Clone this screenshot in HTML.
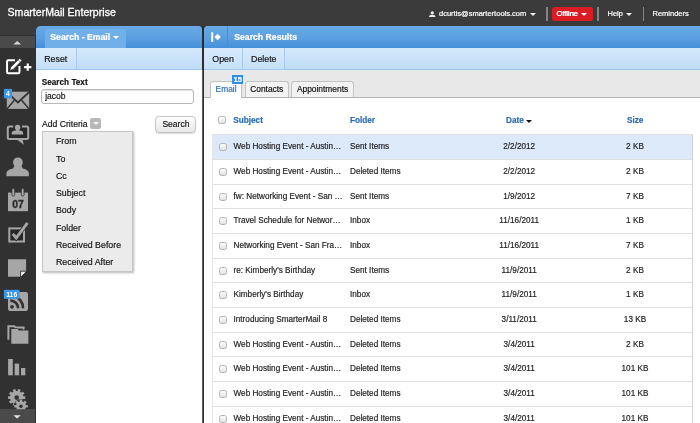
<!DOCTYPE html>
<html>
<head>
<meta charset="utf-8">
<title>SmarterMail Enterprise</title>
<style>
*{box-sizing:border-box;margin:0;padding:0}
html,body{width:700px;height:423px;overflow:hidden;background:#fff}
body{font-family:"Liberation Sans",sans-serif;font-size:8.2px;color:#141414;position:relative;-webkit-text-stroke:.18px}
.abs{position:absolute}
#wrap{position:absolute;left:0;top:0;width:700px;height:423px;overflow:hidden;will-change:transform}
#topbar{left:0;top:0;width:700px;height:48px;background:#3b3b3b}
#title{left:7.5px;top:5px;font-size:10.6px;color:#fff;-webkit-text-stroke:.3px #fff;line-height:14px;white-space:nowrap}
.tr{position:absolute;top:7px;height:13px;line-height:13px;color:#fff;-webkit-text-stroke:.2px #fff;font-size:7.5px;white-space:nowrap}
.vsep{position:absolute;top:6.5px;width:1.4px;height:14.5px;background:#858585}
.caret{position:absolute;width:0;height:0;border-left:3px solid transparent;border-right:3px solid transparent;border-top:3px solid #f0f0f0}
#offline{left:551.5px;top:6.5px;width:41.5px;height:14.5px;background:#dc1c24;border-radius:2.5px;color:#fff;font-size:7.5px;line-height:14px;padding-left:5px;white-space:nowrap;text-shadow:0 0 .4px #fff}
#sidebar{left:0;top:35px;width:35.5px;height:388px;background:#313131}
#sbup{left:0;top:35.8px;width:34.6px;height:12.6px;background:#4a4a4a}
#sbdn{left:0;top:409.2px;width:34.6px;height:14px;background:#4a4a4a}
.phdr{-webkit-text-stroke:.2px #fff;position:absolute;top:25.7px;height:22.3px;background:linear-gradient(#69aae6,#5a9fe0 55%,#4590da);color:#fff;font-weight:bold;font-size:8.8px;line-height:23px;white-space:nowrap}
.ptool{position:absolute;top:48px;height:22px;background:linear-gradient(#d4e8fb,#bfdcf7);border-bottom:1px solid #9fc9f0;font-size:8.8px;line-height:23px;color:#141414;white-space:nowrap}
.tbtn{position:absolute;top:0;height:21px;border-right:1px solid #a6cbee;text-align:center;background:linear-gradient(#d9ebfc,#c6e0f8)}
#divider{left:201.9px;top:25.7px;width:2.3px;height:398px;background:linear-gradient(to right,#858585 0,#3c3c3c 45%,#242424 100%)}
#divtop{left:201.9px;top:25.7px;width:2.3px;height:44.3px;background:#2c2c2c}
#lpanel{left:35.5px;top:70px;width:166.5px;height:353px;background:#fff}
#rbody{left:204px;top:70px;width:496px;height:353px;background:#fff}
#tabstrip{left:204px;top:70px;width:496px;height:27.5px;background:#e8e8e8;border-bottom:1px solid #b4b4b4}
.tab{position:absolute;top:80.5px;height:16.5px;background:#f2f2f2;border:1px solid #c2c2c2;border-bottom:none;border-radius:3.5px 3.5px 0 0;font-size:8.4px;line-height:15px;text-align:center;color:#111;white-space:nowrap}
.tab.active{background:#fff;color:#2c6eb8;height:17.5px}
#badge15{left:232.2px;top:74.8px;width:11.2px;height:9.6px;background:#2f8fe6;color:#fff;font-size:7.6px;font-weight:bold;line-height:10px;text-align:center}
.row{position:absolute;left:212px;width:481px;height:25px;line-height:24.7px;border-top:1px solid #dfdfdf;border-left:1px solid #e6e6e6;border-right:1px solid #d2d2d2;font-size:8.2px;color:#1e1e1e;white-space:nowrap}
.row.sel{background:#dbe9f9}
.row span{position:absolute;top:0}
.cb{position:absolute;width:8px;height:8px;border:1px solid #b4b4b4;border-radius:2.4px;background:linear-gradient(#fdfdfd,#e2e2e2)}
.row .cb{left:5.5px;top:8px}
.c1{left:20.5px}.c2{left:137px}.c3{left:256.2px;width:100px;text-align:center}.c4{left:372px;width:100px;text-align:center}
.hdr{position:absolute;top:114.5px;font-size:8.2px;font-weight:bold;color:#2a6cb6;line-height:12px;white-space:nowrap}
.menu{left:41.5px;top:131px;width:91px;height:140.5px;background:#ebebeb;border:1px solid #c6c6c6;box-shadow:.5px 1px 2px rgba(0,0,0,.28)}
.menu div{position:absolute;left:13.5px;font-size:8.8px;color:#141414;line-height:12px;white-space:nowrap}
</style>
</head>
<body>
<div id="wrap">
<div id="topbar" class="abs"></div>
<div id="title" class="abs">SmarterMail Enterprise</div>

<svg class="abs" style="left:429px;top:10.5px" width="6.5" height="6.5" viewBox="0 0 13 13"><circle cx="6.5" cy="3.6" r="3.3" fill="#f0f0f0"/><path d="M0.3 13 V10.5 Q0.3 7.3 6.5 7.3 Q12.7 7.3 12.7 10.5 V13Z" fill="#f0f0f0"/></svg>
<div class="tr" style="left:439px">dcurtis@smartertools.com</div>
<div class="caret" style="left:529.6px;top:12.6px"></div>
<div class="vsep" style="left:546.2px"></div>
<div id="offline" class="abs">Offline</div>
<div class="caret" style="left:580.8px;top:12.6px;border-top-color:#fff"></div>
<div class="vsep" style="left:597.3px"></div>
<div class="tr" style="left:607.5px">Help</div>
<div class="caret" style="left:626px;top:12.6px"></div>
<div class="vsep" style="left:642.5px"></div>
<div class="tr" style="left:652.5px">Reminders</div>

<div id="sidebar" class="abs"></div>
<div id="sbup" class="abs"></div>
<div id="sbdn" class="abs"></div>
<svg class="abs" style="left:0;top:0" width="36" height="423" viewBox="0 0 36 423">
<!-- up / down arrows -->
<path d="M13.3 44.6 L17.2 41.1 L21.1 44.6Z" fill="#d4d4d4"/>
<path d="M13.4 415.3 L20.8 415.3 L17.1 418.4Z" fill="#e4e4e4"/>
<!-- compose -->
<path d="M15 60.2 H8.3 Q7.05 60.2 7.05 61.4 V72.1 Q7.05 73.35 8.3 73.35 H18.2 Q19.45 73.35 19.45 72.1 V66" fill="none" stroke="#fff" stroke-width="2"/>
<path d="M19.6 58.2 L22 60.6 L13.2 69.4 L9.7 70.5 L10.8 67Z" fill="#fff" stroke="#313131" stroke-width=".9" stroke-linejoin="round"/>
<path d="M18 59.9 L20.4 62.3" stroke="#313131" stroke-width=".5" fill="none"/>
<path d="M27.75 63.5 V70.8 M24.1 67.15 H31.4" stroke="#fff" stroke-width="2.2" fill="none"/>
<!-- mail -->
<rect x="6.8" y="91.7" width="22.4" height="17.2" fill="#a6a6a6"/>
<path d="M6.4 91.6 L17.9 102.4 L29.6 91.6" fill="none" stroke="#313131" stroke-width="1.8"/>
<path d="M6.6 109.2 L14.4 100.2 M29.4 109.2 L21.6 100.2" fill="none" stroke="#313131" stroke-width="1.5"/>
<rect x="3.9" y="88.9" width="8.2" height="9.4" fill="#3b96e8"/>
<text x="8" y="96.1" font-family="Liberation Sans" font-size="6.8" font-weight="bold" fill="#fff" text-anchor="middle">4</text>
<!-- chat -->
<rect x="8" y="127" width="20" height="12" fill="#292929"/>
<path d="M13.2 126.6 H9.3 Q7.8 126.6 7.8 128.1 V137.5 Q7.8 139 9.3 139 H26.7 Q28.2 139 28.2 137.5 V128.1 Q28.2 126.6 26.7 126.6 H22" fill="none" stroke="#a6a6a6" stroke-width="2"/>
<path d="M17 139.6 L23.8 144.8 L22.6 139.6Z" fill="#a6a6a6"/>
<circle cx="17.6" cy="127.4" r="2.7" fill="#a6a6a6"/>
<path d="M11.7 134.4 V133.2 Q11.7 131 15.6 130.6 L16.4 129.4 H18.8 L19.6 130.6 Q23.2 131 23.2 133.2 V134.4Z" fill="#a6a6a6"/>
<!-- person -->
<ellipse cx="17.9" cy="162.4" rx="4.8" ry="5" fill="#a6a6a6"/>
<path d="M6.4 176.2 V173.4 Q6.4 169.8 13 168.4 L14.6 165.6 H21.2 L22.8 168.4 Q28.9 169.8 28.9 173.4 V176.2Z" fill="#a6a6a6"/>
<!-- calendar -->
<rect x="8" y="192.6" width="20" height="18.6" fill="#a6a6a6"/>
<rect x="11.9" y="188.5" width="2.8" height="7.6" rx="1.4" fill="#a6a6a6" stroke="#313131" stroke-width=".8"/>
<rect x="21.3" y="188.5" width="2.8" height="7.6" rx="1.4" fill="#a6a6a6" stroke="#313131" stroke-width=".8"/>
<text x="18" y="207.9" font-family="Liberation Sans" font-size="10.4" font-weight="bold" fill="#2c2c2c" stroke="#2c2c2c" stroke-width=".35" text-anchor="middle">07</text>
<!-- task -->
<rect x="9.3" y="228.4" width="14.7" height="13.1" fill="#282828" stroke="#a6a6a6" stroke-width="2"/>
<path d="M12.6 233.6 L16.2 238 L27.5 222.8" fill="none" stroke="#313131" stroke-width="4.2"/>
<path d="M12.8 233.8 L16.2 238 L27.5 222.8" fill="none" stroke="#a6a6a6" stroke-width="2.8"/>
<!-- note -->
<path d="M8 259.2 H26.1 V271 L20.4 276.8 H8Z" fill="#a6a6a6"/>
<path d="M20.6 277.4 V271.2 H26.7Z" fill="#ececec" stroke="#313131" stroke-width=".9"/>
<!-- rss -->
<rect x="8" y="291.9" width="20" height="19" rx="2.2" fill="#a6a6a6"/>
<circle cx="12" cy="306.8" r="1.9" fill="#313131"/>
<path d="M10.4 300.6 A7.4 7.4 0 0 1 18 308.2" fill="none" stroke="#313131" stroke-width="2.6"/>
<path d="M10.4 295.6 A12.4 12.4 0 0 1 23 308.2" fill="none" stroke="#313131" stroke-width="2.6"/>
<rect x="3.9" y="289.8" width="15.6" height="9" fill="#3b96e8"/>
<text x="11.7" y="297" font-family="Liberation Sans" font-size="6.8" font-weight="bold" fill="#fff" text-anchor="middle">116</text>
<!-- folders -->
<path d="M8.4 339.8 V326.2 H14.4 L15.6 327.6 H23.6 V329.6" fill="none" stroke="#a6a6a6" stroke-width="2"/>
<path d="M11.3 343.8 V329 H17.6 L18.8 330.6 H28.4 V343.8Z" fill="#a6a6a6" stroke="#313131" stroke-width="1" paint-order="stroke"/>
<!-- chart -->
<rect x="8.1" y="359" width="4.7" height="16.3" fill="#a6a6a6"/>
<rect x="14.7" y="363.6" width="4.4" height="11.7" fill="#a6a6a6"/>
<rect x="21" y="368" width="4.3" height="7.3" fill="#a6a6a6"/>
<!-- gears -->
<circle cx="16.7" cy="397.6" r="6.7" fill="#a6a6a6"/><path d="M8.10 397.60 L25.30 397.60 M9.74 392.55 L23.66 402.65 M14.04 389.42 L19.36 405.78 M19.36 389.42 L14.04 405.78 M23.66 392.55 L9.74 402.65" stroke="#a6a6a6" stroke-width="2.7" fill="none"/><circle cx="16.7" cy="397.6" r="2.3" fill="#313131"/>
<circle cx="21" cy="406.3" r="7.3" fill="#313131"/>
<circle cx="21" cy="406.3" r="4.9" fill="#a6a6a6"/><path d="M14.20 406.30 L27.80 406.30 M16.19 401.49 L25.81 411.11 M21.00 399.50 L21.00 413.10 M25.81 401.49 L16.19 411.11" stroke="#a6a6a6" stroke-width="2.6" fill="none"/><circle cx="21" cy="406.3" r="1.8" fill="#313131"/>
<rect x="0" y="409.2" width="34.6" height="13.8" fill="#4a4a4a"/>
<path d="M13.4 415.3 L20.8 415.3 L17.1 418.4Z" fill="#e4e4e4"/>
</svg>


<!-- left panel -->
<div class="phdr" style="left:35.5px;width:166.5px;border-radius:4.5px 3.5px 0 0"></div>
<div class="abs" style="left:45px;top:29px;width:80.8px;height:19px;background:#70afe8;border-radius:3px 3px 0 0;color:#fff;-webkit-text-stroke:.2px #fff;font-weight:bold;font-size:8.7px;line-height:16px;padding-left:5.3px;white-space:nowrap">Search - Email</div>
<div class="caret" style="left:113px;top:35.6px;border-top-color:#fff"></div>
<div class="ptool" style="left:35.5px;width:166.5px"><div class="tbtn" style="left:0;width:41.5px">Reset</div></div>
<div id="lpanel" class="abs"></div>
<div class="abs" style="left:41.8px;top:77px;font-size:8.2px;font-weight:bold;color:#141414;line-height:12px">Search Text</div>
<div class="abs" style="left:41.3px;top:89.3px;width:152.5px;height:14.7px;border:1px solid #b8b8b8;border-radius:3px;background:#fff;font-size:8.5px;line-height:12.4px;padding-left:2.9px;box-shadow:inset 0 1px 1px rgba(0,0,0,.13)">jacob</div>
<div class="abs" style="left:42px;top:118px;font-size:8.65px;color:#141414;line-height:12px">Add Criteria</div>
<div class="abs" style="left:90px;top:118.4px;width:11.2px;height:10.8px;background:#b8b8b8;border-radius:2px"><div style="position:absolute;left:2.6px;top:4px;width:0;height:0;border-left:3px solid transparent;border-right:3px solid transparent;border-top:3.6px solid #f6f6f6"></div></div>
<div class="abs" style="left:155.4px;top:115.5px;width:41px;height:17.3px;border:1px solid #c6c6c6;border-radius:4px;box-shadow:0 .5px 1px rgba(0,0,0,.14);background:linear-gradient(#fdfdfd,#e8e8e8);font-size:8.5px;line-height:15px;text-align:center;color:#141414">Search</div>
<div class="menu abs">
<div style="top:3.2px">From</div>
<div style="top:20.5px">To</div>
<div style="top:37.8px">Cc</div>
<div style="top:55.1px">Subject</div>
<div style="top:72.4px">Body</div>
<div style="top:89.7px">Folder</div>
<div style="top:107px">Received Before</div>
<div style="top:124.3px">Received After</div>
</div>

<div id="divider" class="abs"></div><div id="divtop" class="abs"></div>

<!-- right panel -->
<div class="phdr" style="left:204.2px;width:496px;border-radius:3.5px 0 0 0"><span style="position:absolute;left:30px;font-size:8.7px">Search Results</span><div style="position:absolute;left:22.6px;top:0;width:1px;height:22px;background:#4a8fd3"></div></div>
<svg class="abs" style="left:210.7px;top:31.6px" width="12" height="10" viewBox="0 0 12 10"><rect x="0.2" y="0.3" width="2" height="9.5" fill="#fff"/><path d="M3.4 5 L6.6 1.8 L9.8 5 L6.6 8.2Z" fill="#fff"/></svg>
<div class="ptool" style="left:204px;width:496px"><div class="tbtn" style="left:0;width:38.6px;padding-left:.6px">Open</div><div class="tbtn" style="left:38.6px;width:42.6px;padding-left:.8px">Delete</div></div>
<div id="rbody" class="abs"></div>
<div id="tabstrip" class="abs"></div>
<div class="tab active" style="left:209.8px;width:32.5px">Email</div>
<div class="tab" style="left:244.5px;width:44.5px">Contacts</div>
<div class="tab" style="left:291.3px;width:62.5px">Appointments</div>
<div id="badge15" class="abs">15</div>

<div class="cb" style="left:218px;top:115.8px"></div>
<div class="hdr" style="left:233.3px">Subject</div>
<div class="hdr" style="left:350px">Folder</div>
<div class="hdr" style="left:506px">Date</div>
<div class="caret" style="left:526px;top:119.5px;border-top-color:#141414"></div>
<div class="hdr" style="left:627px">Size</div>

<div id="rows">
<div class="row sel" style="top:134.30px"><div class="cb"></div><span class="c1">Web Hosting Event - Austin…</span><span class="c2">Sent Items</span><span class="c3">2/2/2012</span><span class="c4">2 KB</span></div>
<div class="row" style="top:158.96px"><div class="cb"></div><span class="c1">Web Hosting Event - Austin…</span><span class="c2">Deleted Items</span><span class="c3">2/2/2012</span><span class="c4">2 KB</span></div>
<div class="row" style="top:183.62px"><div class="cb"></div><span class="c1">fw: Networking Event - San …</span><span class="c2">Sent Items</span><span class="c3">1/9/2012</span><span class="c4">7 KB</span></div>
<div class="row" style="top:208.28px"><div class="cb"></div><span class="c1">Travel Schedule for Networ…</span><span class="c2">Inbox</span><span class="c3">11/16/2011</span><span class="c4">1 KB</span></div>
<div class="row" style="top:232.94px"><div class="cb"></div><span class="c1">Networking Event - San Fra…</span><span class="c2">Inbox</span><span class="c3">11/16/2011</span><span class="c4">7 KB</span></div>
<div class="row" style="top:257.60px"><div class="cb"></div><span class="c1">re: Kimberly's Birthday</span><span class="c2">Sent Items</span><span class="c3">11/9/2011</span><span class="c4">2 KB</span></div>
<div class="row" style="top:282.26px"><div class="cb"></div><span class="c1">Kimberly's Birthday</span><span class="c2">Inbox</span><span class="c3">11/9/2011</span><span class="c4">1 KB</span></div>
<div class="row" style="top:306.92px"><div class="cb"></div><span class="c1">Introducing SmarterMail 8</span><span class="c2">Deleted Items</span><span class="c3">3/11/2011</span><span class="c4">13 KB</span></div>
<div class="row" style="top:331.58px"><div class="cb"></div><span class="c1">Web Hosting Event - Austin…</span><span class="c2">Deleted Items</span><span class="c3">3/4/2011</span><span class="c4">2 KB</span></div>
<div class="row" style="top:356.24px"><div class="cb"></div><span class="c1">Web Hosting Event - Austin…</span><span class="c2">Deleted Items</span><span class="c3">3/4/2011</span><span class="c4">101 KB</span></div>
<div class="row" style="top:380.90px"><div class="cb"></div><span class="c1">Web Hosting Event - Austin…</span><span class="c2">Deleted Items</span><span class="c3">3/4/2011</span><span class="c4">101 KB</span></div>
<div class="row" style="top:405.56px"><div class="cb"></div><span class="c1">Web Hosting Event - Austin…</span><span class="c2">Deleted Items</span><span class="c3">3/4/2011</span><span class="c4">101 KB</span></div>
</div>
</div>
</body>
</html>
